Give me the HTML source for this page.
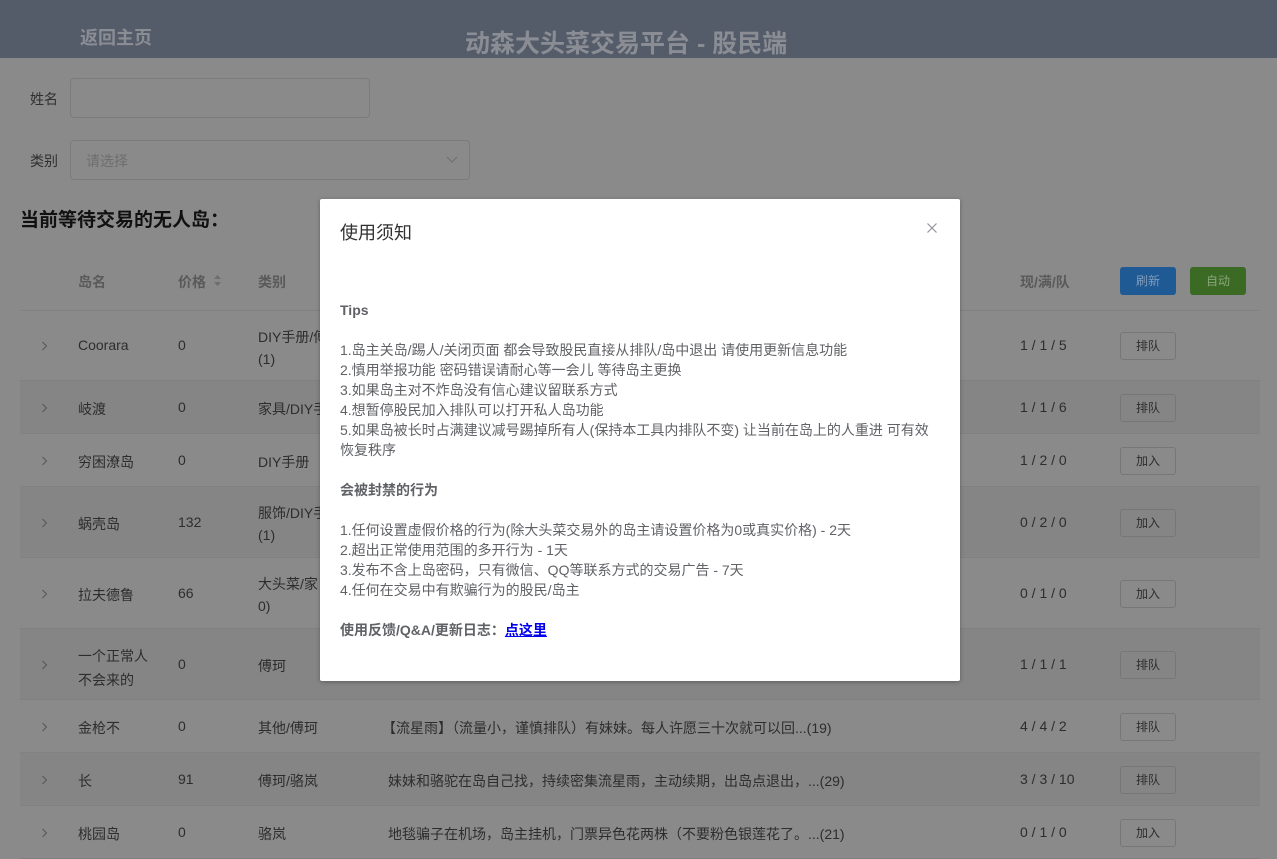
<!DOCTYPE html>
<html><head><meta charset="utf-8"><style>
*{margin:0;padding:0;box-sizing:border-box}
body{width:1277px;height:850px;overflow:hidden;background:#8a8a8a;font-family:"Liberation Sans","Noto Sans CJK SC",sans-serif;position:relative;color:#2d2d2d;font-size:14px}
.a{position:absolute;white-space:nowrap}
.hdr{position:absolute;left:0;top:0;width:1277px;height:58px;background:#545b69}
.row{position:absolute;left:20px;width:1240px;border-bottom:1px solid #7f8183}
.st{background:#858585}
.btn{position:absolute;width:56px;height:28px;border:1px solid #777;border-radius:3px;font-size:12px;text-align:center;line-height:26px;color:#2d2d2d;left:1120px}
.chev{position:absolute;left:41px;width:8px;height:10px}
.modal{position:absolute;left:320px;top:199px;width:640px;height:482px;background:#fff;box-shadow:0 1px 4px rgba(0,0,0,.3);border-radius:2px}
.modal p{font-size:14px;line-height:20px;color:#606266}
</style></head><body>
<div class="hdr"></div>
<div class="a" style="left:80px;top:24px;font-size:18px;font-weight:bold;color:#8a8d93">返回主页</div>
<div class="a" style="left:465px;top:24px;font-size:25px;font-weight:bold;color:#8a8d93">动森大头菜交易平台 - 股民端</div>

<div class="a" style="left:30px;top:89px;color:#2f2f2f">姓名</div>
<div class="a" style="left:70px;top:78px;width:300px;height:40px;border:1px solid #7b7b7b;border-radius:4px"></div>
<div class="a" style="left:30px;top:151px;color:#2f2f2f">类别</div>
<div class="a" style="left:70px;top:140px;width:400px;height:40px;border:1px solid #7b7b7b;border-radius:4px"></div>
<div class="a" style="left:86px;top:151px;color:#6e6e6e">请选择</div>
<svg class="a" style="left:446px;top:156px" width="12" height="8"><path d="M1 1 L6 6 L11 1" fill="none" stroke="#6e6e6e" stroke-width="1"/></svg>
<div class="a" style="left:20px;top:205px;font-size:19px;font-weight:bold;color:#111">当前等待交易的无人岛：</div>

<div class="row" style="top:250px;height:61px"></div>
<div class="a" style="left:78px;top:272px;font-weight:bold;color:#5a5a5a">岛名</div>
<div class="a" style="left:178px;top:272px;font-weight:bold;color:#5a5a5a">价格</div>
<svg class="a" style="left:213px;top:274px" width="9" height="13"><path d="M1 5 L4.5 1 L8 5Z M1 8 L4.5 12 L8 8Z" fill="#6e6e6e"/></svg>
<div class="a" style="left:258px;top:272px;font-weight:bold;color:#5a5a5a">类别</div>
<div class="a" style="left:1020px;top:272px;font-weight:bold;color:#5a5a5a">现/满/队</div>
<div class="a" style="left:1120px;top:267px;width:56px;height:28px;background:#1f5a94;border-radius:3px;color:#7f9cbc;font-size:12px;text-align:center;line-height:28px">刷新</div>
<div class="a" style="left:1190px;top:267px;width:56px;height:28px;background:#3a6a24;border-radius:3px;color:#8aa57c;font-size:12px;text-align:center;line-height:28px">自动</div>

<div class="row" style="top:311px;height:70px"></div>
<div class="row st" style="top:381px;height:53px"></div>
<div class="row" style="top:434px;height:53px"></div>
<div class="row st" style="top:487px;height:71px"></div>
<div class="row" style="top:558px;height:71px"></div>
<div class="row st" style="top:629px;height:71px"></div>
<div class="row" style="top:700px;height:53px"></div>
<div class="row st" style="top:753px;height:53px"></div>
<div class="row" style="top:806px;height:53px"></div>

<svg class="chev" style="top:341px"><path d="M1.5 1 L5.5 5 L1.5 9" fill="none" stroke="#555" stroke-width="1"/></svg>
<div class="a" style="left:78px;top:337px">Coorara</div><div class="a" style="left:178px;top:337px">0</div>
<div class="a" style="left:258px;top:326px;line-height:22px">DIY手册/傅<br>(1)</div>
<div class="a" style="left:1020px;top:337px">1 / 1 / 5</div><div class="btn" style="top:332px">排队</div>

<svg class="chev" style="top:403px"><path d="M1.5 1 L5.5 5 L1.5 9" fill="none" stroke="#555" stroke-width="1"/></svg>
<div class="a" style="left:78px;top:399px">岐渡</div><div class="a" style="left:178px;top:399px">0</div>
<div class="a" style="left:258px;top:399px">家具/DIY手</div>
<div class="a" style="left:1020px;top:399px">1 / 1 / 6</div><div class="btn" style="top:394px">排队</div>

<svg class="chev" style="top:456px"><path d="M1.5 1 L5.5 5 L1.5 9" fill="none" stroke="#555" stroke-width="1"/></svg>
<div class="a" style="left:78px;top:452px">穷困潦岛</div><div class="a" style="left:178px;top:452px">0</div>
<div class="a" style="left:258px;top:452px">DIY手册</div>
<div class="a" style="left:1020px;top:452px">1 / 2 / 0</div><div class="btn" style="top:447px">加入</div>

<svg class="chev" style="top:518px"><path d="M1.5 1 L5.5 5 L1.5 9" fill="none" stroke="#555" stroke-width="1"/></svg>
<div class="a" style="left:78px;top:514px">蜗壳岛</div><div class="a" style="left:178px;top:514px">132</div>
<div class="a" style="left:258px;top:502px;line-height:22px">服饰/DIY手<br>(1)</div>
<div class="a" style="left:1020px;top:514px">0 / 2 / 0</div><div class="btn" style="top:509px">加入</div>

<svg class="chev" style="top:589px"><path d="M1.5 1 L5.5 5 L1.5 9" fill="none" stroke="#555" stroke-width="1"/></svg>
<div class="a" style="left:78px;top:585px">拉夫德鲁</div><div class="a" style="left:178px;top:585px">66</div>
<div class="a" style="left:258px;top:573px;line-height:22px">大头菜/家<br>0)</div>
<div class="a" style="left:1020px;top:585px">0 / 1 / 0</div><div class="btn" style="top:580px">加入</div>

<svg class="chev" style="top:660px"><path d="M1.5 1 L5.5 5 L1.5 9" fill="none" stroke="#555" stroke-width="1"/></svg>
<div class="a" style="left:78px;top:644px;line-height:24px">一个正常人<br>不会来的</div><div class="a" style="left:178px;top:656px">0</div>
<div class="a" style="left:258px;top:656px">傅珂</div>
<div class="a" style="left:1020px;top:656px">1 / 1 / 1</div><div class="btn" style="top:651px">排队</div>

<svg class="chev" style="top:722px"><path d="M1.5 1 L5.5 5 L1.5 9" fill="none" stroke="#555" stroke-width="1"/></svg>
<div class="a" style="left:78px;top:718px">金枪不</div><div class="a" style="left:178px;top:718px">0</div>
<div class="a" style="left:258px;top:718px">其他/傅珂</div>
<div class="a" style="left:382px;top:718px">【流星雨】（流量小，谨慎排队）有妹妹。每人许愿三十次就可以回...(19)</div>
<div class="a" style="left:1020px;top:718px">4 / 4 / 2</div><div class="btn" style="top:713px">排队</div>

<svg class="chev" style="top:775px"><path d="M1.5 1 L5.5 5 L1.5 9" fill="none" stroke="#555" stroke-width="1"/></svg>
<div class="a" style="left:78px;top:771px">长</div><div class="a" style="left:178px;top:771px">91</div>
<div class="a" style="left:258px;top:771px">傅珂/骆岚</div>
<div class="a" style="left:388px;top:771px">妹妹和骆驼在岛自己找，持续密集流星雨，主动续期，出岛点退出，...(29)</div>
<div class="a" style="left:1020px;top:771px">3 / 3 / 10</div><div class="btn" style="top:766px">排队</div>

<svg class="chev" style="top:828px"><path d="M1.5 1 L5.5 5 L1.5 9" fill="none" stroke="#555" stroke-width="1"/></svg>
<div class="a" style="left:78px;top:824px">桃园岛</div><div class="a" style="left:178px;top:824px">0</div>
<div class="a" style="left:258px;top:824px">骆岚</div>
<div class="a" style="left:388px;top:824px">地毯骗子在机场，岛主挂机，门票异色花两株（不要粉色银莲花了。...(21)</div>
<div class="a" style="left:1020px;top:824px">0 / 1 / 0</div><div class="btn" style="top:819px">加入</div>

<div class="modal">
<div class="a" style="left:20px;top:20px;font-size:18px;color:#303133">使用须知</div>
<svg class="a" style="left:607px;top:24px" width="10" height="10"><path d="M0.5 0.5 L9.5 9.5 M9.5 0.5 L0.5 9.5" stroke="#909399" stroke-width="1.2"/></svg>
<div style="position:absolute;left:20px;top:101px;width:590px">
<p style="font-weight:bold">Tips</p>
<p>&nbsp;</p>
<p>1.岛主关岛/踢人/关闭页面 都会导致股民直接从排队/岛中退出 请使用更新信息功能</p>
<p>2.慎用举报功能 密码错误请耐心等一会儿 等待岛主更换</p>
<p>3.如果岛主对不炸岛没有信心建议留联系方式</p>
<p>4.想暂停股民加入排队可以打开私人岛功能</p>
<p>5.如果岛被长时占满建议减号踢掉所有人(保持本工具内排队不变) 让当前在岛上的人重进 可有效<br>恢复秩序</p>
<p>&nbsp;</p>
<p style="font-weight:bold">会被封禁的行为</p>
<p>&nbsp;</p>
<p>1.任何设置虚假价格的行为(除大头菜交易外的岛主请设置价格为0或真实价格) - 2天</p>
<p>2.超出正常使用范围的多开行为 - 1天</p>
<p>3.发布不含上岛密码，只有微信、QQ等联系方式的交易广告 - 7天</p>
<p>4.任何在交易中有欺骗行为的股民/岛主</p>
<p>&nbsp;</p>
<p style="font-weight:bold">使用反馈/Q&amp;A/更新日志：<span style="color:#0000ee;text-decoration:underline">点这里</span></p>
</div>
</div>
</body></html>
